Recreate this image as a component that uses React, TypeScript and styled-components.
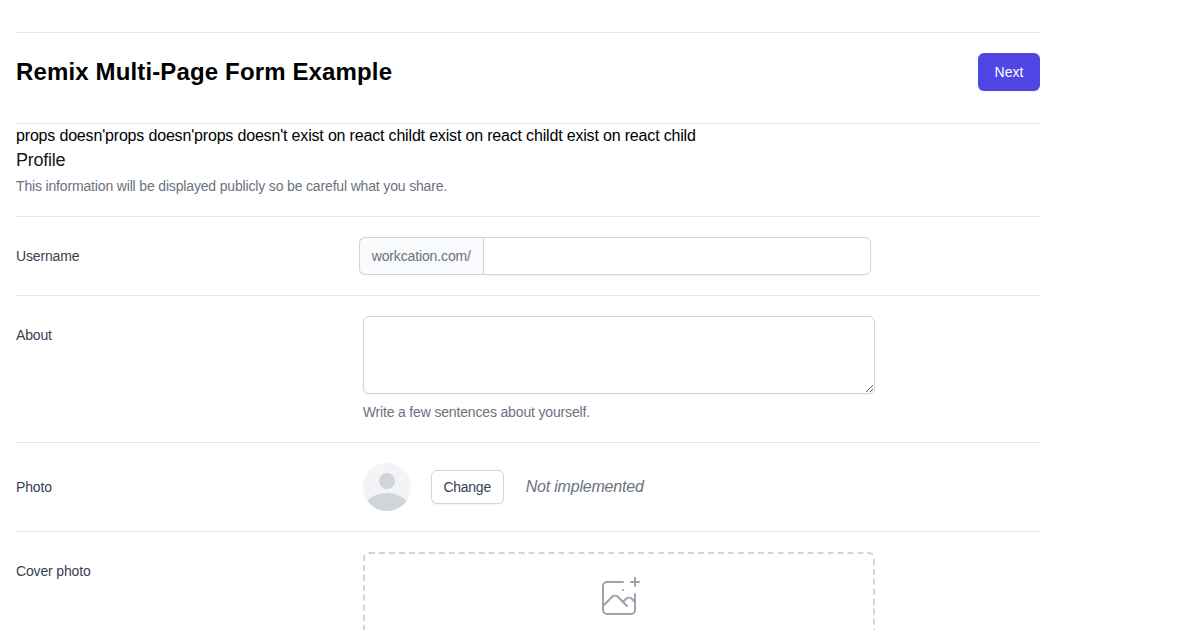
import React from 'react';
import styled, { createGlobalStyle } from 'styled-components';

const GlobalStyle = createGlobalStyle`
  * {
    box-sizing: border-box;
  }

  html, body {
    margin: 0;
    height: 630px;
    overflow: hidden;
    background: #fff;
    font-family: "Liberation Sans", Arial, sans-serif;
    color: #000;
  }
`;

const Page = styled.div`
  width: 1024px;
  margin: 32px 0 0 16px;
`;

const Header = styled.header`
  display: flex;
  align-items: center;
  justify-content: space-between;
  padding: 20px 0 32px;
  border-top: 1px solid #e5e7eb;
  border-bottom: 1px solid #e5e7eb;
`;

const Title = styled.h1`
  margin: 0;
  font-size: 24px;
  line-height: 32px;
  font-weight: 700;
  letter-spacing: 0.14px;
`;

const NextButton = styled.button`
  width: 62px;
  height: 38px;
  padding: 0;
  border: 1px solid transparent;
  border-radius: 6px;
  background: #4f46e5;
  color: #fff;
  font: inherit;
  font-size: 14px;
  box-shadow: 0 1px 2px rgba(0, 0, 0, 0.05);
`;

const Note = styled.div`
  font-size: 16px;
  line-height: 24px;
  letter-spacing: -0.175px;
  white-space: nowrap;
`;

const SectionTitle = styled.h2`
  margin: 0;
  font-size: 18px;
  line-height: 24px;
  font-weight: 400;
  color: #111827;
  letter-spacing: -0.25px;
`;

const SectionText = styled.p`
  margin: 4px 0 0;
  font-size: 14px;
  line-height: 20px;
  color: #6b7280;
  letter-spacing: -0.16px;
`;

const SectionHead = styled.div`
  padding-bottom: 20px;
`;

const Row = styled.div<{ $center?: boolean }>`
  display: grid;
  grid-template-columns: repeat(3, 1fr);
  column-gap: 16px;
  align-items: ${({ $center }) => ($center ? 'center' : 'start')};
  padding: 20px 0;
  border-top: 1px solid #e5e7eb;
`;

const Label = styled.label<{ $center?: boolean }>`
  display: block;
  padding-top: ${({ $center }) => ($center ? '0' : '9px')};
  font-size: 14px;
  line-height: 20px;
  color: #374151;
  letter-spacing: -0.15px;
`;

const Field = styled.div`
  grid-column: span 2;
`;

const InputGroup = styled.div`
  display: flex;
  width: 512px;
  height: 38px;
  margin-left: -4px;
`;

const Prefix = styled.span`
  display: flex;
  align-items: center;
  padding: 0 12px;
  border: 1px solid #d1d5db;
  border-right: none;
  border-radius: 6px 0 0 6px;
  background: #f9fafb;
  font-size: 14px;
  color: #6b7280;
  letter-spacing: -0.13px;
  white-space: nowrap;
`;

const TextInput = styled.input`
  flex: 1;
  min-width: 0;
  border: 1px solid #d1d5db;
  border-radius: 0 6px 6px 0;
  box-shadow: 0 1px 2px rgba(0, 0, 0, 0.05);
  outline: none;
`;

const TextArea = styled.textarea`
  display: block;
  width: 512px;
  height: 78px;
  border: 1px solid #d1d5db;
  border-radius: 6px;
  box-shadow: 0 1px 2px rgba(0, 0, 0, 0.05);
  outline: none;
`;

const Help = styled.p`
  margin: 8px 0 0;
  font-size: 14px;
  line-height: 20px;
  color: #6b7280;
  letter-spacing: -0.16px;
`;

const PhotoRow = styled.div`
  display: flex;
  align-items: center;
`;

const Avatar = styled.span`
  display: block;
  width: 48px;
  height: 48px;
  border-radius: 50%;
  overflow: hidden;
  background: #f3f4f6;

  svg {
    display: block;
    width: 100%;
    height: 100%;
    fill: #d1d5db;
  }
`;

const ChangeButton = styled.button`
  width: 73px;
  height: 34px;
  margin-left: 20px;
  padding: 0;
  border: 1px solid #d1d5db;
  border-radius: 6px;
  background: #fff;
  color: #374151;
  font: inherit;
  font-size: 14px;
  letter-spacing: -0.25px;
  box-shadow: 0 1px 2px rgba(0, 0, 0, 0.05);
`;

const NotImplemented = styled.em`
  margin-left: 22px;
  font-size: 16px;
  line-height: 24px;
  color: #6b7280;
  letter-spacing: -0.2px;
`;

const DropZone = styled.div`
  display: flex;
  justify-content: center;
  width: 512px;
  height: 140px;
  padding-top: 20px;
  border: 2px dashed #d1d5db;
  border-radius: 6px;

  svg {
    display: block;
    width: 48px;
    height: 48px;
    fill: none;
    stroke: #9ca3af;
  }
`;

const App: React.FC = () => {
  return (
    <Page>
      <GlobalStyle />
      <Header>
        <Title>Remix Multi-Page Form Example</Title>
        <NextButton type="button">Next</NextButton>
      </Header>
      <Note>props doesn'props doesn'props doesn't exist on react childt exist on react childt exist on react child</Note>
      <SectionHead>
        <SectionTitle>Profile</SectionTitle>
        <SectionText>This information will be displayed publicly so be careful what you share.</SectionText>
      </SectionHead>
      <Row>
        <Label htmlFor="username">Username</Label>
        <Field>
          <InputGroup>
            <Prefix>workcation.com/</Prefix>
            <TextInput id="username" type="text" />
          </InputGroup>
        </Field>
      </Row>
      <Row>
        <Label htmlFor="about">About</Label>
        <Field>
          <TextArea id="about" />
          <Help>Write a few sentences about yourself.</Help>
        </Field>
      </Row>
      <Row $center>
        <Label $center>Photo</Label>
        <Field>
          <PhotoRow>
            <Avatar>
              <svg viewBox="0 0 24 24" aria-hidden="true">
                <path d="M24 20.993V24H0v-2.996A14.977 14.977 0 0112.004 15c4.904 0 9.26 2.354 11.996 5.993zM16 9.001a4 4 0 11-8 0 4 4 0 018 0z" />
              </svg>
            </Avatar>
            <ChangeButton type="button">Change</ChangeButton>
            <NotImplemented>Not implemented</NotImplemented>
          </PhotoRow>
        </Field>
      </Row>
      <Row>
        <Label>Cover photo</Label>
        <Field>
          <DropZone>
            <svg viewBox="0 0 48 48" aria-hidden="true">
              <path
                d="M28 8H12a4 4 0 00-4 4v20m32-12v8m0 0v8a4 4 0 01-4 4H12a4 4 0 01-4-4v-4m32-4l-3.172-3.172a4 4 0 00-5.656 0L28 28M8 32l9.172-9.172a4 4 0 015.656 0L28 28m0 0l4 4m4-24h8m-4-4v8m-12 4h.02"
                strokeWidth="2"
                strokeLinecap="round"
                strokeLinejoin="round"
              />
            </svg>
          </DropZone>
        </Field>
      </Row>
    </Page>
  );
};

export default App;
